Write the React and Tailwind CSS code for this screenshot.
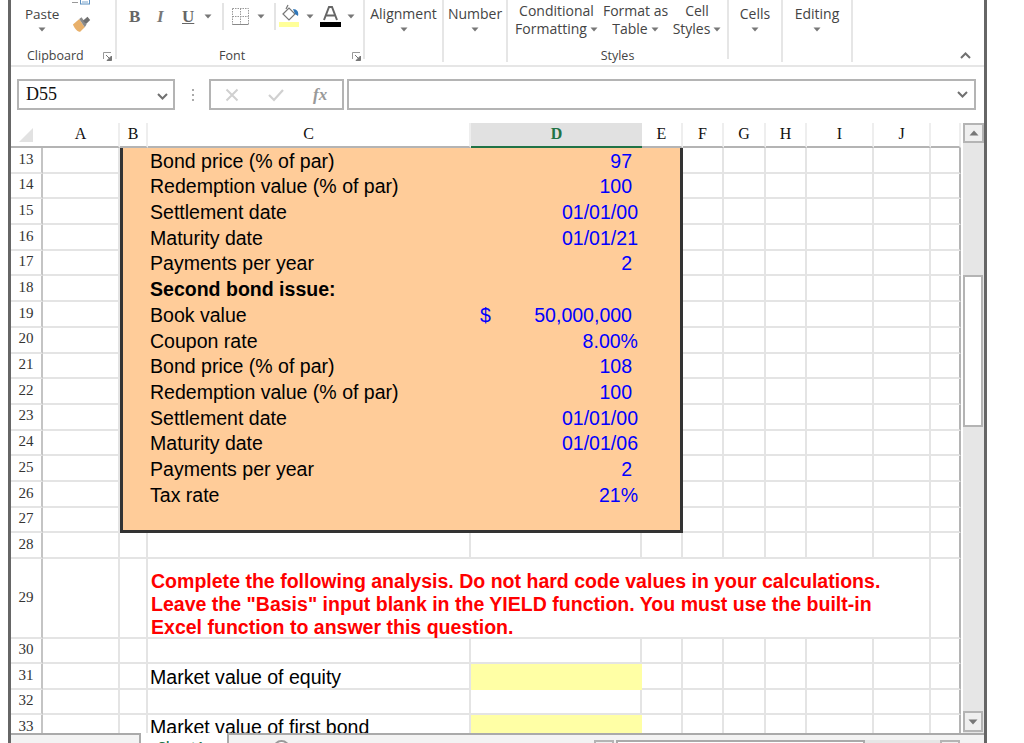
const Caret = ({ className = "" }) => (
  <svg width="8" height="5" viewBox="0 0 8 5" className={`shrink-0 ${className}`}>
    <path d="M0.5 0.5H7.5L4 4.5Z" fill="#777" />
  </svg>
);

const Launcher = ({ className = "" }) => (
  <svg width="9" height="9" viewBox="0 0 9 9" className={`shrink-0 ${className}`}>
    <path d="M0.5 7V0.5H8" fill="none" stroke="#999" strokeWidth="1" />
    <path d="M3 3L7.5 7.5M8.5 4V8.5H4Z" fill="#777" stroke="#777" strokeWidth="1" />
  </svg>
);

const Chevron = ({ up = false, className = "" }) => (
  <svg width="11" height="7" viewBox="0 0 11 7" className={`shrink-0 ${className}`}>
    <path d={up ? "M1 6L5.5 1.5L10 6" : "M1 1L5.5 5.5L10 1"} fill="none" stroke="#707070" strokeWidth="2" />
  </svg>
);

const Group = ({ width, tall = false, label, labelClass = "", launcher = null, children }) => (
  <div className={`flex flex-col shrink-0 ${width} ${tall ? "h-[62px]" : "h-[59px]"} border-r-2 border-[#e6e6e6]`}>
    <div className="h-[47px] shrink-0">{children}</div>
    <div className={`h-[18px] flex items-center text-[12.5px] leading-[18px] text-[#444] ${labelClass}`}>
      {label}
      {launcher}
    </div>
  </div>
);

const DropButton = ({ text }) => (
  <div className="flex flex-col items-center pt-[5px]">
    <span className="text-[14px] leading-[18px] text-[#444]">{text}</span>
    <Caret className="mt-[4px]" />
  </div>
);

const Ribbon = () => (
  <div className="flex h-[65px] relative" style={{ fontFamily: '"Open Sans", sans-serif' }}>
    <Group
      width="w-[106px]"
      label="Clipboard"
      labelClass="pl-[16px]"
      launcher={<Launcher className="ml-[19px]" />}
    >
      <div className="flex">
        <div className="flex flex-col items-center pl-[14px] pt-[5px]">
          <span className="text-[13.5px] leading-[18px] text-[#444]">Paste</span>
          <Caret className="mt-[4px]" />
        </div>
        <div className="flex flex-col pl-[13px]">
          <svg width="20" height="6" viewBox="0 0 20 6">
            <path d="M0 2.5H6" stroke="#999" strokeWidth="1" />
            <rect x="8.5" y="-3" width="9" height="7" fill="#fff" stroke="#5b8fc0" />
            <path d="M10 2H16" stroke="#7aa5cc" strokeWidth="1" />
          </svg>
          <svg width="20" height="19" viewBox="0 0 22 20" className="mt-[9px]">
            <path d="M1 10L8 4L14 13L9 18C6 18 3 15 1 10Z" fill="#e8b06a" />
            <path d="M8 4L10.5 2L16 10L14 13Z" fill="#8a8a8a" />
            <path d="M12 6L17 1.5L20 5L15.5 9.5Z" fill="#6f6f6f" />
          </svg>
        </div>
      </div>
    </Group>

    <Group
      width="w-[248px]"
      label="Font"
      labelClass="pl-[102px]"
      launcher={<Launcher className="ml-[107px]" />}
    >
      <div className="flex items-start pl-[12px] pt-[3px]">
        <div className="flex items-center h-[27px]" style={{ fontFamily: '"Liberation Serif", serif' }}>
          <span className="w-[28px] text-[17px] font-bold text-[#666]">B</span>
          <span className="w-[25px] text-[17px] italic font-bold text-[#777]">I</span>
          <span className="w-[22px] text-[17px] font-bold underline text-[#666]">U</span>
          <Caret />
        </div>
        <div className="w-[2px] h-[27px] ml-[10px] bg-[#e4e4e4]" />
        <div className="flex items-center h-[27px] ml-[8px]">
          <svg width="17" height="17" viewBox="0 0 17 17">
            <path d="M0.5 0.5H16.5V16.5H0.5ZM8.5 0.5V16.5M0.5 8.5H16.5" fill="none" stroke="#999" strokeWidth="1" strokeDasharray="1.5 1" />
            <path d="M0.5 16.5H16.5" stroke="#888" strokeWidth="1" />
          </svg>
          <Caret className="ml-[8px]" />
        </div>
        <div className="w-[2px] h-[27px] ml-[9px] bg-[#e4e4e4]" />
        <div className="flex items-center h-[27px] ml-[3px]">
          <svg width="21" height="24" viewBox="0 0 21 24" className="-mt-[3px]">
            <path d="M4 11L10 5L16 11L10 17Z" fill="#fff" stroke="#777" strokeWidth="1.2" />
            <path d="M7 6L9 2" stroke="#777" strokeWidth="1.2" />
            <path d="M14 6C18 6 20 9 19 13L16 11Z" fill="#2f76b8" />
            <rect x="0" y="19" width="20" height="5" fill="#ffff99" />
          </svg>
          <Caret className="ml-[6px]" />
          <svg width="21" height="25" viewBox="0 0 21 25" className="ml-[6px] -mt-[3px]">
            <path d="M4 17L9 4H12L17 17M6 12.5H15" fill="none" stroke="#666" strokeWidth="2" />
            <rect x="0" y="19" width="21" height="5" fill="#000" />
          </svg>
          <Caret className="ml-[6px]" />
        </div>
      </div>
    </Group>

    <Group width="w-[79px]" tall label="">
      <DropButton text="Alignment" />
    </Group>
    <Group width="w-[64px]" tall label="">
      <DropButton text="Number" />
    </Group>

    <Group width="w-[221px]" label="Styles" labelClass="justify-center">
      <div className="flex pl-[6px] pt-[2px] text-[14px] leading-[18px] text-[#444]">
        <div className="flex flex-col items-center w-[85px]">
          <span>Conditional</span>
          <span className="flex items-center">Formatting<Caret className="ml-[3px]" /></span>
        </div>
        <div className="flex flex-col items-center w-[73px]">
          <span>Format as</span>
          <span className="flex items-center">Table<Caret className="ml-[3px]" /></span>
        </div>
        <div className="flex flex-col items-center w-[50px]">
          <span>Cell</span>
          <span className="flex items-center">Styles<Caret className="ml-[3px]" /></span>
        </div>
      </div>
    </Group>

    <Group width="w-[54px]" tall label="">
      <DropButton text="Cells" />
    </Group>
    <Group width="w-[70px]" tall label="">
      <DropButton text="Editing" />
    </Group>

    <div className="flex-1 flex justify-end items-end pr-[13px] pb-[6px]">
      <Chevron up />
    </div>
  </div>
);

const FormulaBar = () => (
  <div className="flex h-[31px] mt-[12px] ml-[6px]">
    <div className="w-[158px] border-2 border-[#b4b4b4] flex items-center justify-between pl-[7px] pr-[5px]">
      <span className="text-[18px] text-[#111]" style={{ fontFamily: '"Liberation Serif", serif' }}>D55</span>
      <Chevron className="mt-[3px]" />
    </div>
    <div className="w-[34px] flex flex-col items-center justify-center gap-[3px] pl-[1px]">
      <span className="w-[2px] h-[2px] bg-[#aaa]" />
      <span className="w-[2px] h-[2px] bg-[#aaa]" />
      <span className="w-[2px] h-[2px] bg-[#aaa]" />
    </div>
    <div className="w-[135px] border-2 border-[#b4b4b4] flex items-center pl-[14px]">
      <svg width="14" height="14" viewBox="0 0 14 14">
        <path d="M1.5 1.5L12.5 12.5M12.5 1.5L1.5 12.5" stroke="#d0d0d0" strokeWidth="2" />
      </svg>
      <svg width="16" height="14" viewBox="0 0 16 14" className="ml-[29px]">
        <path d="M1 7L6 12L15 2" fill="none" stroke="#d0d0d0" strokeWidth="2.2" />
      </svg>
      <span className="ml-[29px] text-[17px] font-bold italic text-[#999]" style={{ fontFamily: '"Liberation Serif", serif' }}>fx</span>
    </div>
    <div className="w-[629px] ml-[3px] border-2 border-[#b4b4b4] flex items-center justify-end pr-[6px]">
      <Chevron />
    </div>
  </div>
);

const headers = ["A", "B", "C", "D", "E", "F", "G", "H", "I", "J", ""];
const plain = "border-r-2 border-b-2 border-[#e4e4e4]";
const lastCol = "border-r-2 border-b-2 border-r-[#b4b4b4] border-b-[#e4e4e4]";
const arial = { fontFamily: '"Liberation Sans", Arial, sans-serif' };
const serif = { fontFamily: '"Liberation Serif", serif' };

const RowHead = ({ n }) => (
  <div
    className="border-r-2 border-b-2 border-r-[#c4c4c4] border-b-[#e4e4e4] flex items-center justify-center pb-[2px] text-[15px] text-[#333]"
    style={serif}
  >
    {n}
  </div>
);

const Blank = ({ n }) =>
  Array.from({ length: n }, (_, i) => <div key={i} className={plain} />);

const boxRows = [
  ["Bond price (% of par)", "97", "pr-[10px]"],
  ["Redemption value (% of par)", "100", "pr-[10px]"],
  ["Settlement date", "01/01/00", "pr-[4px]"],
  ["Maturity date", "01/01/21", "pr-[4px]"],
  ["Payments per year", "2", "pr-[10px]"],
  ["Second bond issue:", "", "", true],
  ["Book value", "50,000,000", "pr-[10px]", false, true],
  ["Coupon rate", "8.00%", "pr-[4px]"],
  ["Bond price (% of par)", "108", "pr-[10px]"],
  ["Redemption value (% of par)", "100", "pr-[10px]"],
  ["Settlement date", "01/01/00", "pr-[4px]"],
  ["Maturity date", "01/01/06", "pr-[4px]"],
  ["Payments per year", "2", "pr-[10px]"],
  ["Tax rate", "21%", "pr-[4px]"],
];

const OrangeBox = () => (
  <div
    className="col-start-3 col-span-4 row-start-2 row-span-15 bg-[#ffcc99] border-x-[3px] border-b-[3px] border-[#333] flex flex-col text-[19.55px] text-black"
    style={arial}
  >
    {boxRows.map(([label, value, pad, bold, dollar], i) => (
      <div key={i} className="h-[25.7px] shrink-0 flex items-end pl-[27px] leading-[25px]">
        <span className={`w-[321px] ${bold ? "font-bold" : ""}`}>{label}</span>
        <span className="w-[171px] flex justify-between text-[#0000ff] pl-[9px]">
          <span>{dollar ? "$" : ""}</span>
          <span className={pad}>{value}</span>
        </span>
      </div>
    ))}
  </div>
);

const TextRow = ({ n, text, fill }) => (
  <>
    <RowHead n={n} />
    <Blank n={2} />
    <div className={`${plain} flex items-center pl-[2px] pt-[2px] text-[19.55px] leading-[25px] text-black whitespace-nowrap`} style={arial}>
      {text}
    </div>
    <div className={fill ? "bg-[#ffffa5]" : plain} />
    <Blank n={6} />
    <div className={lastCol} />
  </>
);

const EmptyRow = ({ n, skipOrange = false }) => (
  <>
    <RowHead n={n} />
    {skipOrange ? <Blank n={1} /> : <Blank n={5} />}
    <Blank n={5} />
    <div className={lastCol} />
  </>
);

const ScrollButton = ({ up, className = "" }) => (
  <div className={`border-2 border-[#b4b4b4] bg-[#efefef] flex items-center justify-center ${className}`}>
    <svg width="10" height="6" viewBox="0 0 10 6">
      <path d={up ? "M5 0.5L9.5 5.5H0.5Z" : "M0.5 0.5H9.5L5 5.5Z"} fill="#777" />
    </svg>
  </div>
);

const Sheet = () => (
  <div className="flex h-[610px] mt-[13px] overflow-hidden">
    <div className="w-[950px] h-[610px] overflow-hidden">
      <div className="grid grid-cols-[32px_77px_28px_323px_171px_41px_41px_42px_41px_67px_57px_30px] grid-rows-[25px_repeat(16,25.7px)_79.5px_25.5px_26px_25px_25.7px]">
        <OrangeBox />
        <div className="border-b-2 border-[#b4b4b4] flex items-center justify-center">
          <svg width="14" height="14" viewBox="0 0 14 14" className="ml-[-2px]">
            <path d="M14 0V14H0Z" fill="#e2e2e2" />
          </svg>
        </div>
        {headers.map((h, i) =>
          h === "D" ? (
            <div
              key={i}
              className="bg-[#e1e1e1] border-b-2 border-[#217346] flex items-center justify-center pb-[2px] text-[16px] font-bold text-[#217346]"
              style={serif}
            >
              {h}
            </div>
          ) : (
            <div
              key={i}
              className="border-b-2 border-b-[#b4b4b4] border-r-2 border-r-[#eeeeee] flex items-center justify-center pb-[2px] text-[16px] text-[#111]"
              style={serif}
            >
              {h}
            </div>
          )
        )}
        {Array.from({ length: 15 }, (_, i) => (
          <EmptyRow key={i} n={13 + i} skipOrange />
        ))}
        <EmptyRow n={28} />
        <RowHead n={29} />
        <Blank n={2} />
        <div className={`col-span-8 ${plain} flex items-start pl-[3px] pt-[11px] font-bold text-[19.55px] leading-[23px] text-[#ff0000]`} style={arial}>
          <div className="whitespace-pre-line">
            {'Complete the following analysis. Do not hard code values in your calculations.\nLeave the "Basis" input blank in the YIELD function. You must use the built-in\nExcel function to answer this question.'}
          </div>
        </div>
        <div className={lastCol} />
        <EmptyRow n={30} />
        <TextRow n={31} text="Market value of equity" fill />
        <EmptyRow n={32} />
        <TextRow n={33} text="Market value of first bond" fill />
      </div>
    </div>
    <div className="w-[21px] ml-[2px] bg-[#e6e6e6] flex flex-col">
      <ScrollButton up className="h-[20px] shrink-0" />
      <div className="h-[132px] shrink-0" />
      <div className="h-[152px] shrink-0 w-[20px] bg-white border-2 border-[#b4b4b4]" />
      <div className="flex-1" />
      <ScrollButton className="h-[21px] w-[20px] shrink-0 mb-[1px]" />
    </div>
  </div>
);

const BottomBar = () => (
  <div className="flex h-[10px] overflow-hidden" style={{ fontFamily: '"Open Sans", sans-serif' }}>
    <div className="w-[130px] bg-[#f3f3f3] border-t-2 border-r-2 border-[#aaaaaa]" />
    <div className="w-[86px] bg-white pl-[17px] pt-[5px] text-[14px] leading-[18px] font-semibold text-[#217346]">Sheet1</div>
    <div className="flex-1 flex bg-[#f3f3f3] border-t-2 border-l-2 border-[#aaaaaa] pt-[5px]">
      <div className="ml-[44px] w-[17px] h-[17px] rounded-full border-2 border-[#999] bg-white shrink-0" />
      <div className="ml-[304px] w-[20px] h-[12px] border-2 border-[#b4b4b4] bg-[#efefef] shrink-0" />
      <div className="ml-[2px] w-[249px] h-[12px] border-2 border-[#aaaaaa] bg-white shrink-0" />
      <div className="w-[75px] h-[12px] bg-[#e6e6e6] shrink-0" />
      <div className="w-[20px] h-[12px] border-2 border-[#b4b4b4] bg-[#efefef] shrink-0" />
    </div>
  </div>
);

export default function App() {
  return (
    <div className="w-[1024px] h-[743px] bg-white overflow-hidden">
      <div className="ml-[8px] w-[979px] h-[743px] border-x-[3px] border-[#666] overflow-hidden">
        <Ribbon />
        <div className="h-[2px] bg-[#e6e6e6]" />
        <FormulaBar />
        <Sheet />
        <BottomBar />
      </div>
    </div>
  );
}
